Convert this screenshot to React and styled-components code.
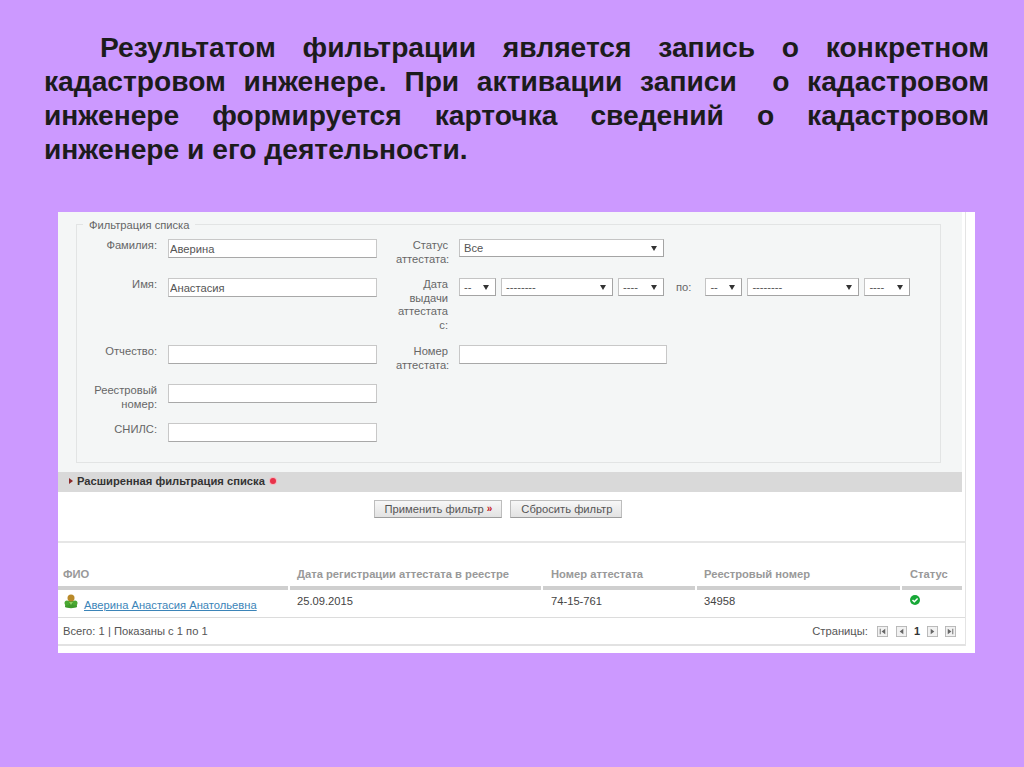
import styled, { createGlobalStyle } from 'styled-components';

const Global = createGlobalStyle`
  html, body { margin: 0; padding: 0; }
  body { font-family: "Liberation Sans", Arial, sans-serif; background: #cc99ff; }
`

const Slide = styled.div`
  width: 1024px;
  height: 767px;
  overflow: hidden;
  background: #cc99ff;
  padding-top: 30px;
  box-sizing: border-box;
`

const Lead = styled.p`
  margin: 0 35px 0 44px;
  font-size: 28.2px;
  font-weight: bold;
  line-height: 34px;
  color: #1c1c1c;
  text-align: justify;
  text-indent: 56px;
`

const Sheet = styled.div`
  margin: 46px 0 0 58px;
  width: 917px;
  height: 441px;
  background: #fff;
  font-size: 11.2px;
  color: #666;
`

const Inner = styled.div`
  width: 908px;
  height: 434px;
  box-sizing: border-box;
  border-right: 1px solid #e4e4e4;
  display: flex;
  flex-direction: column;
`

const FilterArea = styled.div`
  width: 904px;
  height: 260px;
  flex: none;
  box-sizing: border-box;
  padding: 5px 21px 0 18px;
  background: #f4f6f6;
`

const Fieldset = styled.fieldset`
  margin: 0;
  padding: 7px 0 0 0;
  height: 246px;
  box-sizing: border-box;
  border: 1px solid #e2e4e4;
  min-width: 0;
`

const Legend = styled.legend`
  margin-left: 6px;
  padding: 2px 5px 0 6px;
  font-size: 11.2px;
  line-height: 13px;
  color: #666;
`

const FormGrid = styled.div`
  display: grid;
  grid-template-columns: 80px 209px 60px 1fr;
  grid-template-rows: 39px 67px 39px 39px 39px;
  column-gap: 11px;
`

const Label = styled.div`
  text-align: right;
  line-height: 13.5px;
  color: #666;
  padding-left: ${p => p.$narrow ? 8 : 0}px;
`

const Input = styled.input`
  width: ${p => p.$w || 209}px;
  height: 19px;
  box-sizing: border-box;
  border: 1px solid #c8c8c8;
  border-bottom-color: #a8a8a8;
  background: #fff;
  padding: 0 1px;
  font: 11.2px "Liberation Sans", Arial, sans-serif;
  color: #555;
  outline: none;
`

const Select = styled.div`
  width: ${p => p.$w}px;
  height: 18px;
  flex: none;
  box-sizing: border-box;
  border: 1px solid #c4c4c4;
  border-bottom-color: #a4a4a4;
  border-right-color: #a4a4a4;
  background: #fff;
  padding: 0 6px 0 4px;
  display: flex;
  align-items: center;
  justify-content: space-between;
  color: #555;
  font-size: 11.2px;
  &::after {
    content: "";
    border-left: 3px solid transparent;
    border-right: 3px solid transparent;
    border-top: 5px solid #333;
  }
`

const SelectRow = styled.div`
  display: flex;
  align-items: flex-start;
  gap: 5px;
`

const Until = styled.span`
  margin: 3px 9px 0 7px;
  color: #666;
`

const Expander = styled.div`
  width: 904px;
  height: 20px;
  flex: none;
  background: #d9d9d9;
  display: flex;
  align-items: center;
  padding: 0 0 2px 11px;
  box-sizing: border-box;
  gap: 4px;
  font-weight: bold;
  font-size: 11.2px;
  color: #333;
  &::before {
    content: "";
    border-top: 3.5px solid transparent;
    border-bottom: 3.5px solid transparent;
    border-left: 4px solid #8c2a2a;
  }
`

const RedDot = styled.span`
  width: 6px;
  height: 6px;
  border-radius: 50%;
  background: #e8324a;
  box-shadow: 0 0 0 1px #f4b8bf;
  margin-left: 1px;
`

const Actions = styled.div`
  width: 904px;
  display: flex;
  justify-content: center;
  gap: 8px;
  padding: 8px 24px 0 0;
  height: 49px;
  box-sizing: border-box;
  flex: none;
`

const Btn = styled.div`
  height: 18px;
  box-sizing: border-box;
  padding: 0 9px 0 10px;
  border: 1px solid #bdbdbd;
  border-bottom-color: #9c9c9c;
  background: linear-gradient(#f7f7f7, #e2e2e2);
  display: flex;
  align-items: center;
  gap: 3px;
  color: #555;
  font-size: 11.2px;
`

const Chevrons = styled.span`
  color: #c4161c;
  font-weight: bold;
  font-size: 10px;
  line-height: 1;
`

const TableWrap = styled.div`
  border-top: 2px solid #e6e6e6;
  display: flex;
  flex-direction: column;
`

const HeadRow = styled.div`
  display: grid;
  grid-template-columns: 232px 253px 154px 205px 60px;
  margin-top: 25px;
`

const HeadCell = styled.div`
  font-weight: bold;
  color: #999;
  font-size: 11.2px;
  padding: 0 0 5px ${p => p.$pad || 7}px;
  margin-right: 2px;
  border-bottom: 4px solid #cfcfcf;
  line-height: 13px;
  &:last-child { margin-right: 0; }
`

const BodyRow = styled.div`
  display: grid;
  grid-template-columns: 232px 253px 154px 205px 60px;
  height: 28px;
  box-sizing: border-box;
  border-bottom: 1px solid #dcdcdc;
  color: #444;
`

const Cell = styled.div`
  padding: 5px 0 0 ${p => p.$pad || 7}px;
  line-height: 13px;
`

const NameCell = styled.div`
  display: flex;
  align-items: flex-start;
  gap: 6px;
  padding: 4px 0 0 6px;
`

const NameLink = styled.a`
  color: #3b84b8;
  text-decoration: underline;
  margin-top: 5px;
  line-height: 13px;
`

const Footer = styled.div`
  height: 28px;
  box-sizing: border-box;
  display: flex;
  align-items: center;
  justify-content: space-between;
  padding: 0 9px 0 5px;
  border-bottom: 2px solid #e2e2e2;
  color: #555;
`

const Pager = styled.div`
  display: flex;
  align-items: center;
  gap: 7px;
`

const PageNum = styled.b`
  color: #333;
  font-size: 11px;
`

const PageBtn = styled.svg`
  width: 11px;
  height: 11px;
  margin-left: ${p => p.$gap || 0}px;
`

function Page({ d, gap }) {
  return (
    <PageBtn viewBox="0 0 12 12" $gap={gap}>
      <rect x="0.5" y="0.5" width="11" height="11" fill="#f1f1f1" stroke="#b5b5b5" />
      <path d={d} fill="#666" />
    </PageBtn>
  )
}

function Person() {
  return (
    <svg width="14" height="15" viewBox="0 0 14 15">
      <path d="M1 13c0-4 2-6 6-6s6 2 6 6c-2 1.500-10 1.500-12 0z" fill="#3f9a2c" />
      <circle cx="3" cy="9" r="2.500" fill="#4aa832" />
      <circle cx="11" cy="9" r="2.500" fill="#4aa832" />
      <circle cx="7" cy="4" r="3.500" fill="#b98a2a" />
      <path d="M5 8l2 3 2-3z" fill="#8ccf60" />
    </svg>
  )
}

function Check() {
  return (
    <svg width="10" height="10" viewBox="0 0 10 10">
      <circle cx="5" cy="5" r="5" fill="#17a837" />
      <path d="M2.500 5l1.800 1.800L7.600 3.500" fill="none" stroke="#fff" strokeWidth="1.500" />
    </svg>
  )
}

export default function App() {
  return (
    <Slide>
      <Global />
      <Lead>
        Результатом фильтрации является запись о конкретном кадастровом инженере. При активации записи&nbsp; о кадастровом инженере формируется карточка сведений о кадастровом инженере и его деятельности.
      </Lead>
      <Sheet>
        <Inner>
          <FilterArea>
            <Fieldset>
              <Legend>Фильтрация списка</Legend>
              <FormGrid>
                <Label>Фамилия:</Label>
                <Input readOnly value="Аверина" />
                <Label $narrow>Статус аттестата:</Label>
                <Select $w={205}>Все</Select>

                <Label>Имя:</Label>
                <Input readOnly value="Анастасия" />
                <Label $narrow>Дата выдачи аттестата с:</Label>
                <SelectRow>
                  <Select $w={37}>--</Select>
                  <Select $w={112}>--------</Select>
                  <Select $w={46}>----</Select>
                  <Until>по:</Until>
                  <Select $w={37}>--</Select>
                  <Select $w={112}>--------</Select>
                  <Select $w={46}>----</Select>
                </SelectRow>

                <Label>Отчество:</Label>
                <Input readOnly value="" />
                <Label $narrow>Номер аттестата:</Label>
                <Input readOnly value="" $w={208} />

                <Label>Реестровый номер:</Label>
                <Input readOnly value="" />
                <span />
                <span />

                <Label>СНИЛС:</Label>
                <Input readOnly value="" />
              </FormGrid>
            </Fieldset>
          </FilterArea>
          <Expander>Расширенная фильтрация списка <RedDot /></Expander>
          <Actions>
            <Btn>Применить фильтр <Chevrons>»</Chevrons></Btn>
            <Btn>Сбросить фильтр</Btn>
          </Actions>
          <TableWrap>
            <HeadRow>
              <HeadCell $pad={5}>ФИО</HeadCell>
              <HeadCell>Дата регистрации аттестата в реестре</HeadCell>
              <HeadCell $pad={8}>Номер аттестата</HeadCell>
              <HeadCell>Реестровый номер</HeadCell>
              <HeadCell $pad={8}>Статус</HeadCell>
            </HeadRow>
            <BodyRow>
              <NameCell><Person /><NameLink>Аверина Анастасия Анатольевна</NameLink></NameCell>
              <Cell>25.09.2015</Cell>
              <Cell $pad={8}>74-15-761</Cell>
              <Cell>34958</Cell>
              <Cell $pad={8}><Check /></Cell>
            </BodyRow>
            <Footer>
              <span>Всего: 1 | Показаны с 1 по 1</span>
              <Pager>
                <span>Страницы:</span>
                <Page d="M3 3h1v6H3zM9 3v6L5 6z" gap={2} />
                <Page d="M8 3v6L4 6z" gap={1} />
                <PageNum>1</PageNum>
                <Page d="M4 3v6l4-3z" />
                <Page d="M3 3v6l4-3zM8 3h1v6H8z" />
              </Pager>
            </Footer>
          </TableWrap>
        </Inner>
      </Sheet>
    </Slide>
  )
}
